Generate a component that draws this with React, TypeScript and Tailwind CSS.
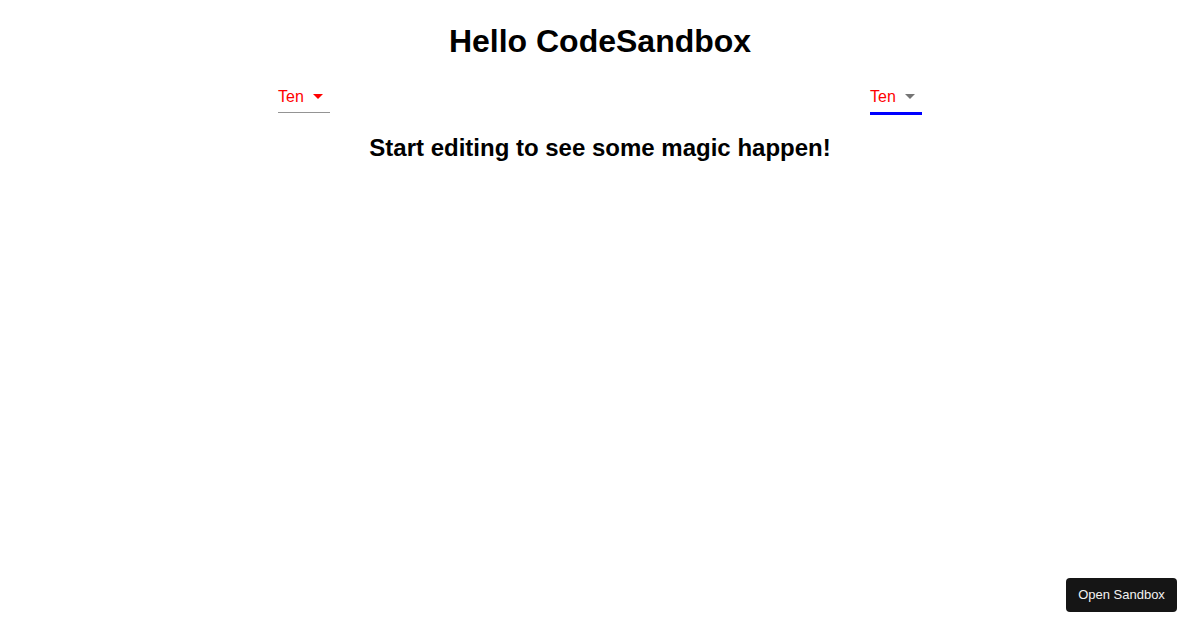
import React from 'react';

function Caret({ className }: { className: string }) {
  return (
    <svg viewBox="0 0 24 24" className={className} fill="currentColor">
      <path d="M7 10l5 5 5-5z" />
    </svg>
  );
}

function SelectBox({ focused }: { focused?: boolean }) {
  return (
    <div
      className={
        'flex w-[52px] items-center ' +
        (focused ? 'mb-[-1px] border-b-[3px] border-[#0000ff]' : 'border-b border-[rgba(0,0,0,0.42)]')
      }
    >
      <div className="flex-1 pb-[6px] pt-[7px] text-left text-[16px] leading-[19px] text-[#ff0000]">Ten</div>
      <Caret
        className={'-ml-2 h-6 w-6 shrink-0 ' + (focused ? 'text-[rgba(0,0,0,0.54)]' : 'text-[#ff0000]')}
      />
    </div>
  );
}

export default function App() {
  return (
    <div className="min-h-[630px] bg-white text-center font-['Liberation_Sans',Arial,sans-serif] text-black">
      <h1 className="pt-[16.5px] pb-[15.5px] text-[32px] font-bold leading-normal">Hello CodeSandbox</h1>
      <div className="mx-auto flex w-[644px] items-start justify-between">
        <SelectBox />
        <SelectBox focused />
      </div>
      <h2 className="mt-[16px] text-[24px] font-bold leading-normal">Start editing to see some magic happen!</h2>

      <button
        type="button"
        className="fixed bottom-[18px] right-[23px] h-[34px] w-[111px] rounded-[4px] bg-[#151515] text-[13px] text-[#f2f2f2]"
      >
        Open Sandbox
      </button>
    </div>
  );
}
